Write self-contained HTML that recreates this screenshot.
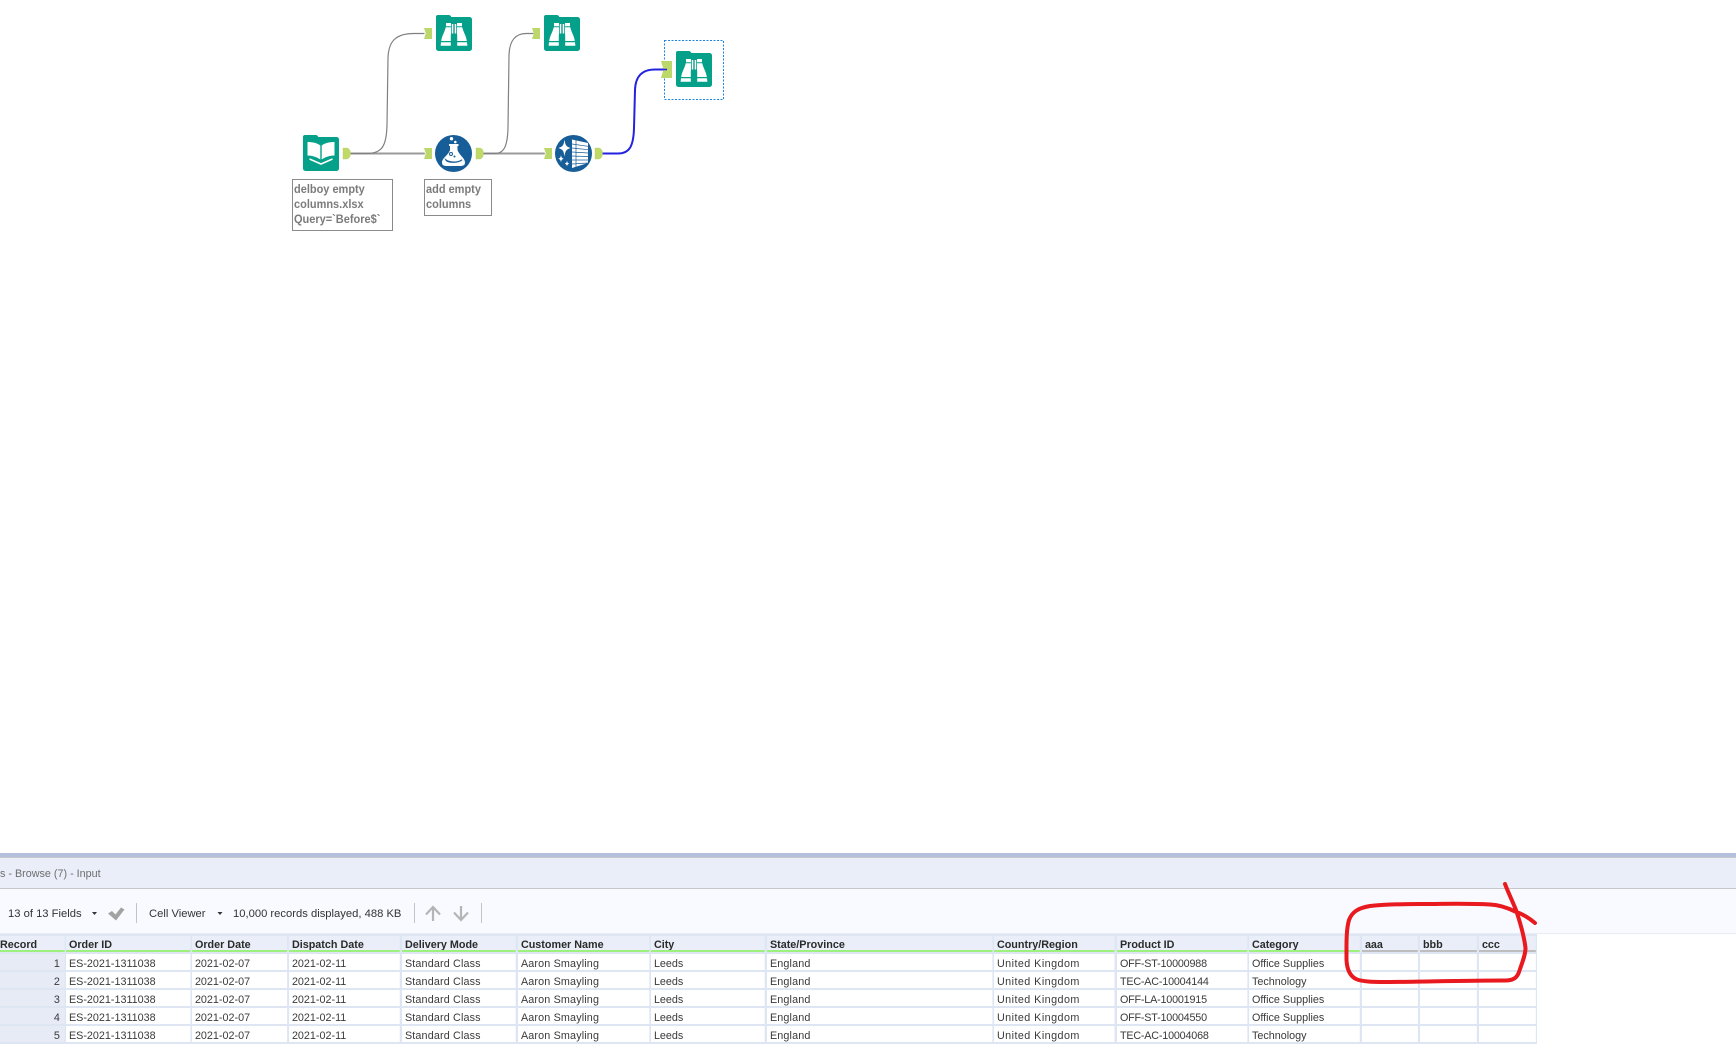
<!DOCTYPE html>
<html><head><meta charset="utf-8"><style>
html,body{margin:0;padding:0;background:#fff}
#p{position:relative;width:1736px;height:1044px;overflow:hidden;background:#fff;font-family:"Liberation Sans",sans-serif}
.a{position:absolute}
.t{position:absolute;white-space:nowrap;font-size:11px;line-height:14px;transform:scaleX(1.02);transform-origin:0 0;color:#333}
.n{position:absolute;white-space:nowrap;font-size:11.5px;font-weight:bold;line-height:15px;color:#7b7b7b;transform:scaleX(.955);transform-origin:0 0}
.box{position:absolute;border:1px solid #8a8a8a;background:#fff;box-sizing:border-box}
.col{position:absolute;top:936px;width:calc(var(--w)/.98);transform:scaleX(.98);transform-origin:0 0;font-size:11px;color:#3a3a3a}
.col b,.col i{display:block;font-style:normal;white-space:nowrap;overflow:hidden;padding-left:3px;box-sizing:border-box}
.col b{height:16px;line-height:18px;background:#e9eef8;border-bottom:2px solid #9ef07c;margin-bottom:2px;color:#2b2b2b}
.col i{height:16px;line-height:21px;background:#fff;margin-bottom:2px}
.g b{border-bottom-color:#bdbdbd}
.r i{background:#e6ebf6;text-align:right;padding-right:4.5px}
.r b{padding-left:0}
.wide i{letter-spacing:.45px}
.nar i{letter-spacing:-.2px}
.sl i{letter-spacing:.15px}
</style></head><body><div id="p">

<div class="a" style="left:0;top:853px;width:1736px;height:4px;background:#b4c0dc"></div>
<div class="a" style="left:0;top:857px;width:1736px;height:1px;background:#c9c9cc"></div>
<div class="a" style="left:0;top:858px;width:1736px;height:30px;background:#e9eef8"></div>
<div class="a" style="left:0;top:888px;width:1736px;height:1px;background:#c6c6c8"></div>
<div class="a" style="left:0;top:889px;width:1736px;height:44px;background:#f8faff"></div>
<div class="a" style="left:0;top:933px;width:1736px;height:1px;background:#e8ecf5"></div>
<div class="a" style="left:0;top:934px;width:1537px;height:110px;background:#dfe6f3"></div>

<div class="t" style="left:0;top:867px;color:#6e6e6e;transform:scaleX(.98)">s - Browse (7) - Input</div>
<div class="t" style="left:8px;top:907px">13 of 13 Fields</div>
<div class="t" style="left:149px;top:907px">Cell Viewer</div>
<div class="t" style="left:233px;top:907px">10,000 records displayed, 488 KB</div>

<svg class="a" style="left:0;top:0" width="1736" height="1044" viewBox="0 0 1736 1044">
<defs>
<g id="folder"><path d="M2 0H13Q14 0 14.500 .8L15.500 2H33.500A2.500 2.500 0 0 1 36 4.500V33.500A2.500 2.500 0 0 1 33.500 36H2.500A2.500 2.500 0 0 1 0 33.500V2A2 2 0 0 1 2 0Z" fill="#04a08a"/></g>
<g id="bino"><use href="#folder"/>
<path d="M10 8H15V11.300H10ZM21 8H26V11.300H21Z" fill="#fff"/>
<path d="M15.800 9H17.300V18.500H15.800ZM18.700 9H20.200V18.500H18.700Z" fill="#fff"/>
<path d="M9.800 12.300H15V19.500H14.800V26H5.200C5.800 21 8.300 18 9.800 12.300ZM26.200 12.300H21V19.500H21.200V26H30.800C30.200 21 27.700 18 26.200 12.300Z" fill="#fff"/>
<path d="M5 27.300H14.800V30.700H4.600ZM31 27.300H21.200V30.700H31.400Z" fill="#fff"/>
<path d="M15.400 19.500H20.600V33H15.400Z" fill="#04a08a"/>
</g>
<g id="in"><path d="M0 0H8V11H0L1.800 5.500Z" fill="#bcd86a"/></g>
<g id="out"><path d="M0 0H3.500C6 0 7.500 2.500 7.500 5.500S6 11 3.500 11H0Z" fill="#c0da6a" stroke="#b2cc5e" stroke-width=".4"/></g>
</defs>

<!-- wires -->
<g fill="none" stroke-linecap="round">
<path d="M351 153.500H424" stroke="#9a9a9a" stroke-width="2"/>
<path d="M351 153.500H367C382 153.500 386.500 146 387 125L388 58C388.500 41 396 33.500 414 33.500H424" stroke="#808080" stroke-width="1.200"/>
<path d="M483 153.500H544" stroke="#9a9a9a" stroke-width="2"/>
<path d="M483 153.500H495C503 153.500 507.500 148 508 128L509 55C509.500 40 516 33.500 526 33.500H533" stroke="#808080" stroke-width="1.200"/>
<path d="M602 153.500H618C629 153.500 633.500 147 634 128L635 90C635.500 76 642 69.500 655 69.500H664" stroke="#2222e0" stroke-width="2"/>
</g>

<!-- tool 1: book -->
<g transform="translate(303 135)"><use href="#folder"/>
<path d="M4.500 7C8 7 14 7.500 17.300 10.500V24.500C14 22 9 20.500 4.500 20.500ZM31.500 7C28 7 22 7.500 18.700 10.500V24.500C22 22 27 20.500 31.500 20.500Z" fill="#fff"/>
<path d="M6.500 24L18 29L29.500 24" fill="none" stroke="#fff" stroke-width="1.500"/>
</g>
<use href="#out" x="343" y="148"/>

<!-- flask -->
<use href="#in" x="424" y="148"/>
<g transform="translate(435 135)">
<circle cx="18.500" cy="18.500" r="18.500" fill="#175d97"/>
<circle cx="16.500" cy="3.700" r="1.700" fill="#fff"/><circle cx="20.300" cy="7" r="1.300" fill="#fff"/>
<path d="M14 9H23.500V11H22.500V15C24 20 30 23 30 27.500C30 30 28.500 31 25 31H12C8.500 31 7 30 7 27.500C7 23 13.500 20 15 15V11H14Z" fill="#fff"/>
<path d="M10.500 24.500C14 27.500 23 28 27 24.800C25.500 27.500 12 29 10.500 24.500Z" fill="#175d97" stroke="#175d97"/>
<circle cx="16" cy="19" r="1.500" fill="none" stroke="#175d97" stroke-width="1"/><circle cx="19.500" cy="21.500" r="1" fill="#175d97"/>
</g>
<use href="#out" x="476" y="148"/>

<!-- table tool -->
<use href="#in" x="544" y="148"/>
<g transform="translate(555 135)">
<circle cx="18.500" cy="18.500" r="18.500" fill="#175d97"/>
<path d="M9.500 4.500C10.300 10 11 11.500 15.500 13C11 14.500 10.300 16 9.500 21.500C8.700 16 8 14.500 3.500 13C8 11.500 8.700 10 9.500 4.500Z" fill="#fff"/>
<path d="M6 20C6.400 22.500 6.800 23 8.800 23.800C6.800 24.500 6.400 25 6 27.500C5.600 25 5.200 24.500 3.200 23.800C5.200 23 5.600 22.500 6 20Z" fill="#fff"/>
<path d="M12 25.500C12.300 27.500 12.600 28 14.300 28.600C12.600 29.200 12.300 29.700 12 31.500C11.700 29.700 11.400 29.200 9.700 28.600C11.400 28 11.700 27.500 12 25.500Z" fill="#fff"/>
<path d="M17 4.500L33 8V28L17 33Z" fill="#fff"/>
<path d="M17 9L33 11.300M17 13L33 14.700M17 17L33 18M17 21L33 21.500M17 25L33 25M17 29L33 28M21 4V33" stroke="#175d97" stroke-width=".7" fill="none"/>
</g>
<use href="#out" x="595" y="148"/>

<!-- browse tools -->
<use href="#in" x="424" y="28"/>
<use href="#bino" x="436" y="15"/>
<use href="#in" x="532" y="28"/>
<use href="#bino" x="544" y="15"/>

<rect x="664.500" y="40.500" width="59" height="59" fill="none" stroke="#1c86e0" stroke-width="1" stroke-dasharray="2 1.500"/>
<path d="M661 61H672V78H661L663.500 69.500Z" fill="#bcd86a"/>
<path d="M655 69.500H667" stroke="#2222e0" stroke-width="1.500"/>
<use href="#bino" x="676" y="51"/>

<!-- toolbar glyphs -->
<path d="M92 912H97L94.500 915Z" fill="#333"/>
<path d="M217.500 912H222.500L220 915Z" fill="#333"/>
<path d="M108 913.500L112 911L115.500 914.500L121 907.500L124.500 909.500L116 920.500Z" fill="#a2a2a2"/>
<path d="M136.500 903V923M414.500 903V923M481.500 903V923" stroke="#c4c4c4" stroke-width="1"/>
<path d="M433 921V908M426 914.500L433 907L440 914.500" fill="none" stroke="#b5b5b5" stroke-width="2.200"/>
<path d="M461 906V919M454 912.500L461 920L468 912.500" fill="none" stroke="#b5b5b5" stroke-width="2.200"/>
</svg>

<!-- annotations -->
<div class="box" style="left:292px;top:179px;width:101px;height:52px"></div>
<div class="n" style="left:294px;top:183px">delboy empty</div>
<div class="n" style="left:294px;top:198px">columns.xlsx</div>
<div class="n" style="left:294px;top:213px">Query=`Before$`</div>
<div class="box" style="left:424px;top:179px;width:68px;height:37px"></div>
<div class="n" style="left:426px;top:183px">add empty</div>
<div class="n" style="left:426px;top:198px">columns</div>

<!-- table -->
<div class="col r" style="left:0;--w:64.300px"><b>Record</b><i>1</i><i>2</i><i>3</i><i>4</i><i>5</i></div>
<div class="col" style="left:66px;--w:124px"><b>Order ID</b><i>ES-2021-1311038</i><i>ES-2021-1311038</i><i>ES-2021-1311038</i><i>ES-2021-1311038</i><i>ES-2021-1311038</i></div>
<div class="col" style="left:192px;--w:95px"><b>Order Date</b><i>2021-02-07</i><i>2021-02-07</i><i>2021-02-07</i><i>2021-02-07</i><i>2021-02-07</i></div>
<div class="col" style="left:289px;--w:111px"><b>Dispatch Date</b><i>2021-02-11</i><i>2021-02-11</i><i>2021-02-11</i><i>2021-02-11</i><i>2021-02-11</i></div>
<div class="col sl" style="left:402px;--w:114px"><b>Delivery Mode</b><i>Standard Class</i><i>Standard Class</i><i>Standard Class</i><i>Standard Class</i><i>Standard Class</i></div>
<div class="col sl" style="left:518px;--w:131px"><b>Customer Name</b><i>Aaron Smayling</i><i>Aaron Smayling</i><i>Aaron Smayling</i><i>Aaron Smayling</i><i>Aaron Smayling</i></div>
<div class="col" style="left:651px;--w:114px"><b>City</b><i>Leeds</i><i>Leeds</i><i>Leeds</i><i>Leeds</i><i>Leeds</i></div>
<div class="col sl" style="left:767px;--w:225px"><b>State/Province</b><i>England</i><i>England</i><i>England</i><i>England</i><i>England</i></div>
<div class="col wide" style="left:994px;--w:121px"><b>Country/Region</b><i>United Kingdom</i><i>United Kingdom</i><i>United Kingdom</i><i>United Kingdom</i><i>United Kingdom</i></div>
<div class="col nar" style="left:1117px;--w:130px"><b>Product ID</b><i>OFF-ST-10000988</i><i>TEC-AC-10004144</i><i>OFF-LA-10001915</i><i>OFF-ST-10004550</i><i>TEC-AC-10004068</i></div>
<div class="col" style="left:1249px;--w:111px"><b>Category</b><i>Office Supplies</i><i>Technology</i><i>Office Supplies</i><i>Office Supplies</i><i>Technology</i></div>
<div class="col g" style="left:1362px;--w:56px"><b>aaa</b><i></i><i></i><i></i><i></i><i></i></div>
<div class="col g" style="left:1420px;--w:57px"><b>bbb</b><i></i><i></i><i></i><i></i><i></i></div>
<div class="col g" style="left:1479px;--w:57px"><b>ccc</b><i></i><i></i><i></i><i></i><i></i></div>

<svg class="a" style="left:0;top:0" width="1736" height="1044" viewBox="0 0 1736 1044">
<path d="M1535 923C1529 918 1523 914 1515 911.500C1508 908 1500 905 1490 904.500C1465 903 1445 904 1420 904C1400 904 1385 904.500 1370 906C1358 908 1352 912 1349 920C1346 930 1346.500 945 1346.500 960C1347 970 1350 976 1356 979C1362 982 1375 982 1390 982C1430 981.500 1470 980.500 1505 980.500C1513 980.500 1517 978 1519 972C1522 963 1525.500 955 1525.500 948C1524 935 1520 922 1516 910C1512 900 1508 892 1505 884" fill="none" stroke="#e8191f" stroke-width="4" stroke-linecap="round" stroke-linejoin="round"/>
</svg>
</div></body></html>
